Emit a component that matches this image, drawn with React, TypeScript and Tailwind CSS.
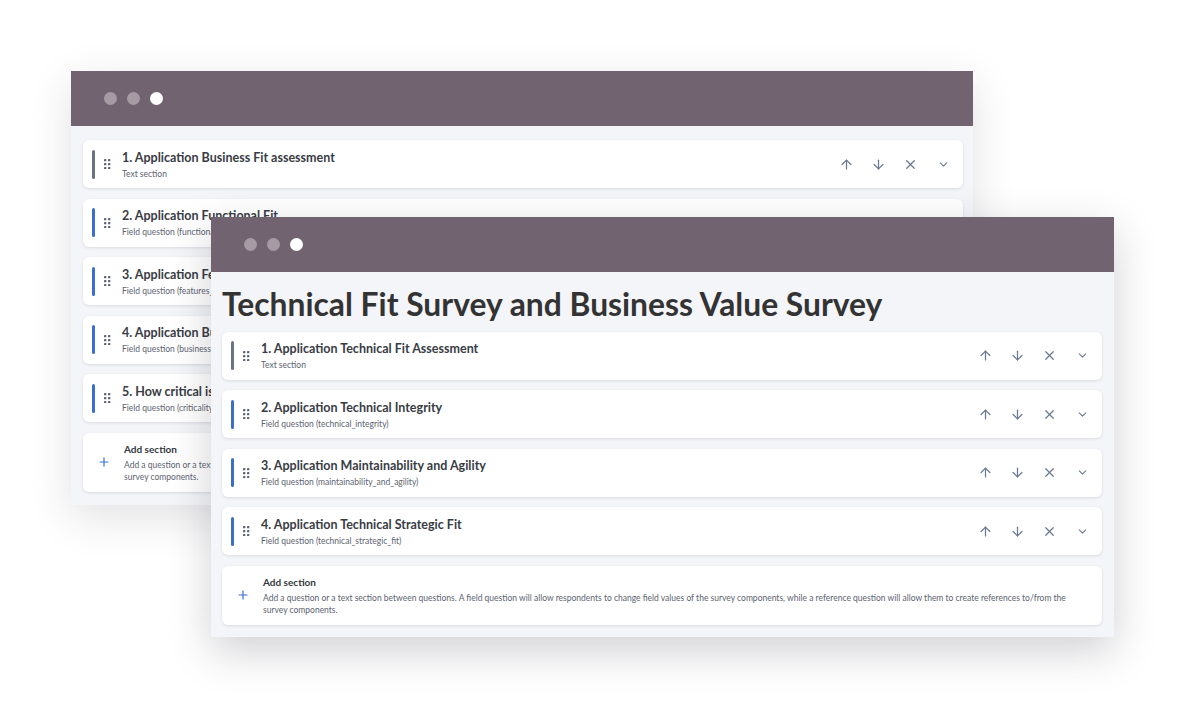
import { ArrowUp, ArrowDown, X, ChevronDown, Plus } from 'lucide-react'

type Item = { title: string; sub: string; bar: 'gray' | 'blue' }

const backItems: Item[] = [
  { title: '1. Application Business Fit assessment', sub: 'Text section', bar: 'gray' },
  { title: '2. Application Functional Fit', sub: 'Field question (functional_fit)', bar: 'blue' },
  { title: '3. Application Features Fit', sub: 'Field question (features_fit)', bar: 'blue' },
  { title: '4. Application Business Value', sub: 'Field question (business_value)', bar: 'blue' },
  { title: '5. How critical is the application?', sub: 'Field question (criticality)', bar: 'blue' },
]

const frontItems: Item[] = [
  { title: '1. Application Technical Fit Assessment', sub: 'Text section', bar: 'gray' },
  { title: '2. Application Technical Integrity', sub: 'Field question (technical_integrity)', bar: 'blue' },
  { title: '3. Application Maintainability and Agility', sub: 'Field question (maintainability_and_agility)', bar: 'blue' },
  { title: '4. Application Technical Strategic Fit', sub: 'Field question (technical_strategic_fit)', bar: 'blue' },
]

function Grip() {
  // 6 dots, 2 columns x 3 rows
  return (
    <svg width="7" height="10" viewBox="0 0 7 10" className="shrink-0">
      {[0, 4].map((x) =>
        [0, 4, 8].map((y) => (
          <rect key={`${x}-${y}`} x={x} y={y} width="2.3" height="2.3" rx="0.4" fill="#5d6577" />
        ))
      )}
    </svg>
  )
}

function Dots() {
  return (
    <div className="flex items-center gap-[10px] pl-[33px]">
      <span className="w-[13px] h-[13px] rounded-full bg-[#a69aa5]" />
      <span className="w-[13px] h-[13px] rounded-full bg-[#a69aa5]" />
      <span className="w-[13px] h-[13px] rounded-full bg-white" />
    </div>
  )
}

function Card({ item }: { item: Item }) {
  return (
    <div className="h-[48px] shrink-0 bg-white rounded-[6px] shadow-[0_1px_3px_rgba(30,40,60,0.12)] flex items-center pl-[9px] pr-[13px]">
      <div className={`w-[3px] h-[29px] rounded-full ${item.bar === 'gray' ? 'bg-[#6b7486]' : 'bg-[#3a6fcd]'}`} />
      <div className="ml-[9px]"><Grip /></div>
      <div className="ml-[11px] flex flex-col flex-1 min-w-0 pt-[2px]">
        <span className="text-[12.5px] leading-[14px] font-bold text-[#383c44] whitespace-nowrap">{item.title}</span>
        <span className="text-[8.5px] leading-[11px] text-[#5c6370] mt-[4px] whitespace-nowrap">{item.sub}</span>
      </div>
      <div className="flex items-center gap-[17px] text-[#6b7a90]">
        <ArrowUp size={15} strokeWidth={2} />
        <ArrowDown size={15} strokeWidth={2} />
        <X size={15} strokeWidth={2} />
        <ChevronDown size={13} strokeWidth={2} className="ml-[2px]" />
      </div>
    </div>
  )
}

function AddSection() {
  return (
    <div className="h-[59px] shrink-0 bg-white rounded-[6px] shadow-[0_1px_3px_rgba(30,40,60,0.12)] flex items-center pl-[14px] pr-[12px]">
      <Plus size={14} strokeWidth={2} className="text-[#3a6fcd] shrink-0" />
      <div className="ml-[13px] flex flex-col pt-[2px]">
        <span className="text-[10px] font-bold text-[#333840] leading-[12px]">Add section</span>
        <p className="text-[8.5px] text-[#5c6370] leading-[12px] mt-[4px]">
          Add a question or a text section between questions. A field question will allow respondents to change field values of the survey components, while a reference question will allow them to create references to/from the survey components.
        </p>
      </div>
    </div>
  )
}

export default function App() {
  return (
    <div className="relative w-[1185px] h-[713px] bg-white overflow-hidden" style={{ fontFamily: 'Lato, "Open Sans", sans-serif' }}>
      {/* back window */}
      <div className="absolute left-[71px] top-[71px] w-[902px] bg-[#f4f5f8] shadow-[0_12px_40px_rgba(40,40,60,0.14)] flex flex-col">
        <div className="h-[55px] bg-[#716370] flex items-center">
          <Dots />
        </div>
        <div className="flex flex-col gap-[10.5px] pt-[14px] pb-[13px] pl-[12px] pr-[10px]">
          {backItems.map((it) => <Card key={it.title} item={it} />)}
          <AddSection />
        </div>
      </div>

      {/* front window */}
      <div className="absolute left-[211px] top-[217px] w-[903px] bg-[#f4f5f8] shadow-[0_14px_40px_rgba(40,40,60,0.22)] flex flex-col">
        <div className="h-[55px] bg-[#716370] flex items-center">
          <Dots />
        </div>
        <div className="flex flex-col pl-[11px] pr-[12px] pb-[12px]">
          <h1 className="text-[31.8px] font-bold text-[#333333] leading-none pt-[17px] pb-[11px] whitespace-nowrap">
            Technical Fit Survey and Business Value Survey
          </h1>
          <div className="flex flex-col gap-[10.5px]">
            {frontItems.map((it) => <Card key={it.title} item={it} />)}
            <AddSection />
          </div>
        </div>
      </div>
    </div>
  )
}
